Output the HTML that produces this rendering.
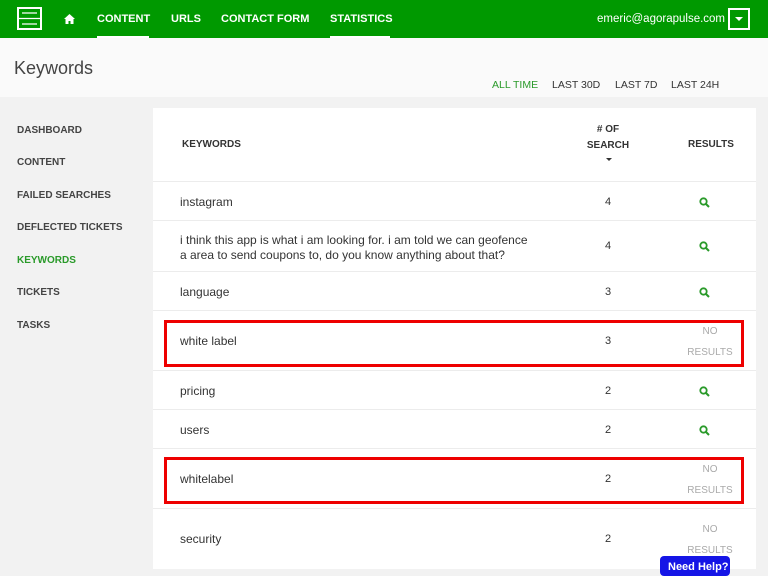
<!DOCTYPE html>
<html><head><meta charset="utf-8"><style>
*{margin:0;padding:0;box-sizing:border-box}
body{width:768px;height:569px;overflow:hidden;background:#f2f2f2;font-family:"Liberation Sans",sans-serif;position:relative;color:#333}
.nav{position:absolute;left:0;top:0;width:768px;height:38px;background:#009900}
.nav a{position:absolute;top:13px;color:#fff;font-size:11px;font-weight:bold;text-decoration:none}
.ul{position:absolute;top:36px;height:3px;background:#fff}
.hdr{position:absolute;left:0;top:38px;width:768px;height:59px;background:#fafafa}
.side a{position:absolute;left:17px;font-size:10px;font-weight:bold;color:#444}
.card{position:absolute;left:153px;top:108px;width:603px;height:461px;background:#fff}
.line{position:absolute;left:153px;width:603px;height:1px;background:#ececec}
.t{position:absolute;font-size:12px;color:#333}
.n{position:absolute;left:605px;font-size:11px;color:#333}
.nr{position:absolute;left:686px;width:48px;text-align:center;font-size:10px;color:#aaa;line-height:21px}
.red{position:absolute;left:164px;width:580px;border:3px solid #e00}
.q{position:absolute;left:699px}
.dt{position:absolute;top:41px;font-size:10.5px;color:#333}
</style></head><body>
<div class="nav">
<svg style="position:absolute;left:17px;top:7px" width="25" height="23" viewBox="0 0 25 23"><rect x="1" y="1" width="23" height="21" fill="none" stroke="#fff" stroke-width="2"/><path d="M1 11.5H24M5 6H20M5 17H20" stroke="#fff" stroke-width="1.3" fill="none"/></svg>
<svg style="position:absolute;left:64px;top:14px" width="11" height="10" viewBox="0 0 11 10"><path d="M5.5 0L0 5h1.5v5h3V7h2v3h3V5H11z" fill="#fff"/></svg>
<a style="left:97px">CONTENT</a><div class="ul" style="left:97px;width:52px"></div>
<a style="left:171px">URLS</a>
<a style="left:221px">CONTACT FORM</a>
<a style="left:330px">STATISTICS</a><div class="ul" style="left:330px;width:60px"></div>
<a style="left:597px;font-weight:normal;font-size:11.5px">emeric@agorapulse.com</a>
<div style="position:absolute;left:728px;top:8px;width:22px;height:22px;border:2px solid #fff"></div>
<div style="position:absolute;left:735px;top:17px;border-left:4px solid transparent;border-right:4px solid transparent;border-top:4px solid #fff"></div>
</div>
<div class="hdr">
<div style="position:absolute;left:14px;top:20px;font-size:18px;color:#444">Keywords</div>
<div class="dt" style="left:492px;color:#2a9a2a">ALL TIME</div>
<div class="dt" style="left:552px">LAST 30D</div>
<div class="dt" style="left:615px">LAST 7D</div>
<div class="dt" style="left:671px">LAST 24H</div>
</div>
<div class="side">
<a style="top:125px">DASHBOARD</a><a style="top:157px">CONTENT</a><a style="top:190px">FAILED SEARCHES</a><a style="top:222px">DEFLECTED TICKETS</a><a style="top:255px;color:#2a9a2a">KEYWORDS</a><a style="top:287px">TICKETS</a><a style="top:320px">TASKS</a>
</div>
<div class="card"></div>
<div class="t" style="left:182px;top:139px;font-size:10px;font-weight:bold">KEYWORDS</div>
<div style="position:absolute;left:578px;top:122px;width:60px;text-align:center;font-size:10px;font-weight:bold;line-height:16px">#&nbsp;OF<br>SEARCH</div>
<div style="position:absolute;left:606px;top:158px;border-left:3px solid transparent;border-right:3px solid transparent;border-top:3px solid #333"></div>
<div class="t" style="left:688px;top:139px;font-size:10px;font-weight:bold">RESULTS</div>
<div class="line" style="top:181px"></div><div class="line" style="top:220px"></div><div class="line" style="top:271px"></div><div class="line" style="top:310px"></div><div class="line" style="top:370px"></div><div class="line" style="top:409px"></div><div class="line" style="top:448px"></div><div class="line" style="top:508px"></div>
<div class="t" style="left:180px;top:195px">instagram</div><div class="n" style="top:196px">4</div>
<div class="t" style="left:180px;top:233px;line-height:15px">i think this app is what i am looking for. i am told we can geofence<br>a area to send coupons to, do you know anything about that?</div><div class="n" style="top:240px">4</div>
<div class="t" style="left:180px;top:285px">language</div><div class="n" style="top:286px">3</div>
<div class="t" style="left:180px;top:334px">white label</div><div class="n" style="top:335px">3</div><div class="nr" style="top:321px">NO<br>RESULTS</div>
<div class="t" style="left:180px;top:384px">pricing</div><div class="n" style="top:385px">2</div>
<div class="t" style="left:180px;top:423px">users</div><div class="n" style="top:424px">2</div>
<div class="t" style="left:180px;top:472px">whitelabel</div><div class="n" style="top:473px">2</div><div class="nr" style="top:459px">NO<br>RESULTS</div>
<div class="t" style="left:180px;top:532px">security</div><div class="n" style="top:533px">2</div><div class="nr" style="top:519px">NO<br>RESULTS</div>
<svg class="q" style="top:197px" width="11" height="11" viewBox="0 0 11 11"><circle cx="4.5" cy="4.5" r="3.2" fill="none" stroke="#2a9a2a" stroke-width="1.8"/><path d="M7 7l3 3" stroke="#2a9a2a" stroke-width="2"/></svg>
<svg class="q" style="top:241px" width="11" height="11" viewBox="0 0 11 11"><circle cx="4.5" cy="4.5" r="3.2" fill="none" stroke="#2a9a2a" stroke-width="1.8"/><path d="M7 7l3 3" stroke="#2a9a2a" stroke-width="2"/></svg>
<svg class="q" style="top:287px" width="11" height="11" viewBox="0 0 11 11"><circle cx="4.5" cy="4.5" r="3.2" fill="none" stroke="#2a9a2a" stroke-width="1.8"/><path d="M7 7l3 3" stroke="#2a9a2a" stroke-width="2"/></svg>
<svg class="q" style="top:386px" width="11" height="11" viewBox="0 0 11 11"><circle cx="4.5" cy="4.5" r="3.2" fill="none" stroke="#2a9a2a" stroke-width="1.8"/><path d="M7 7l3 3" stroke="#2a9a2a" stroke-width="2"/></svg>
<svg class="q" style="top:425px" width="11" height="11" viewBox="0 0 11 11"><circle cx="4.5" cy="4.5" r="3.2" fill="none" stroke="#2a9a2a" stroke-width="1.8"/><path d="M7 7l3 3" stroke="#2a9a2a" stroke-width="2"/></svg>
<div class="red" style="top:320px;height:47px"></div>
<div class="red" style="top:457px;height:47px"></div>
<div style="position:absolute;left:660px;top:556px;width:70px;height:20px;background:#1515e6;border-radius:4px;color:#fff;font-size:11px;font-weight:bold;padding:5px 0 0 8px">Need Help?</div>
</body></html>
